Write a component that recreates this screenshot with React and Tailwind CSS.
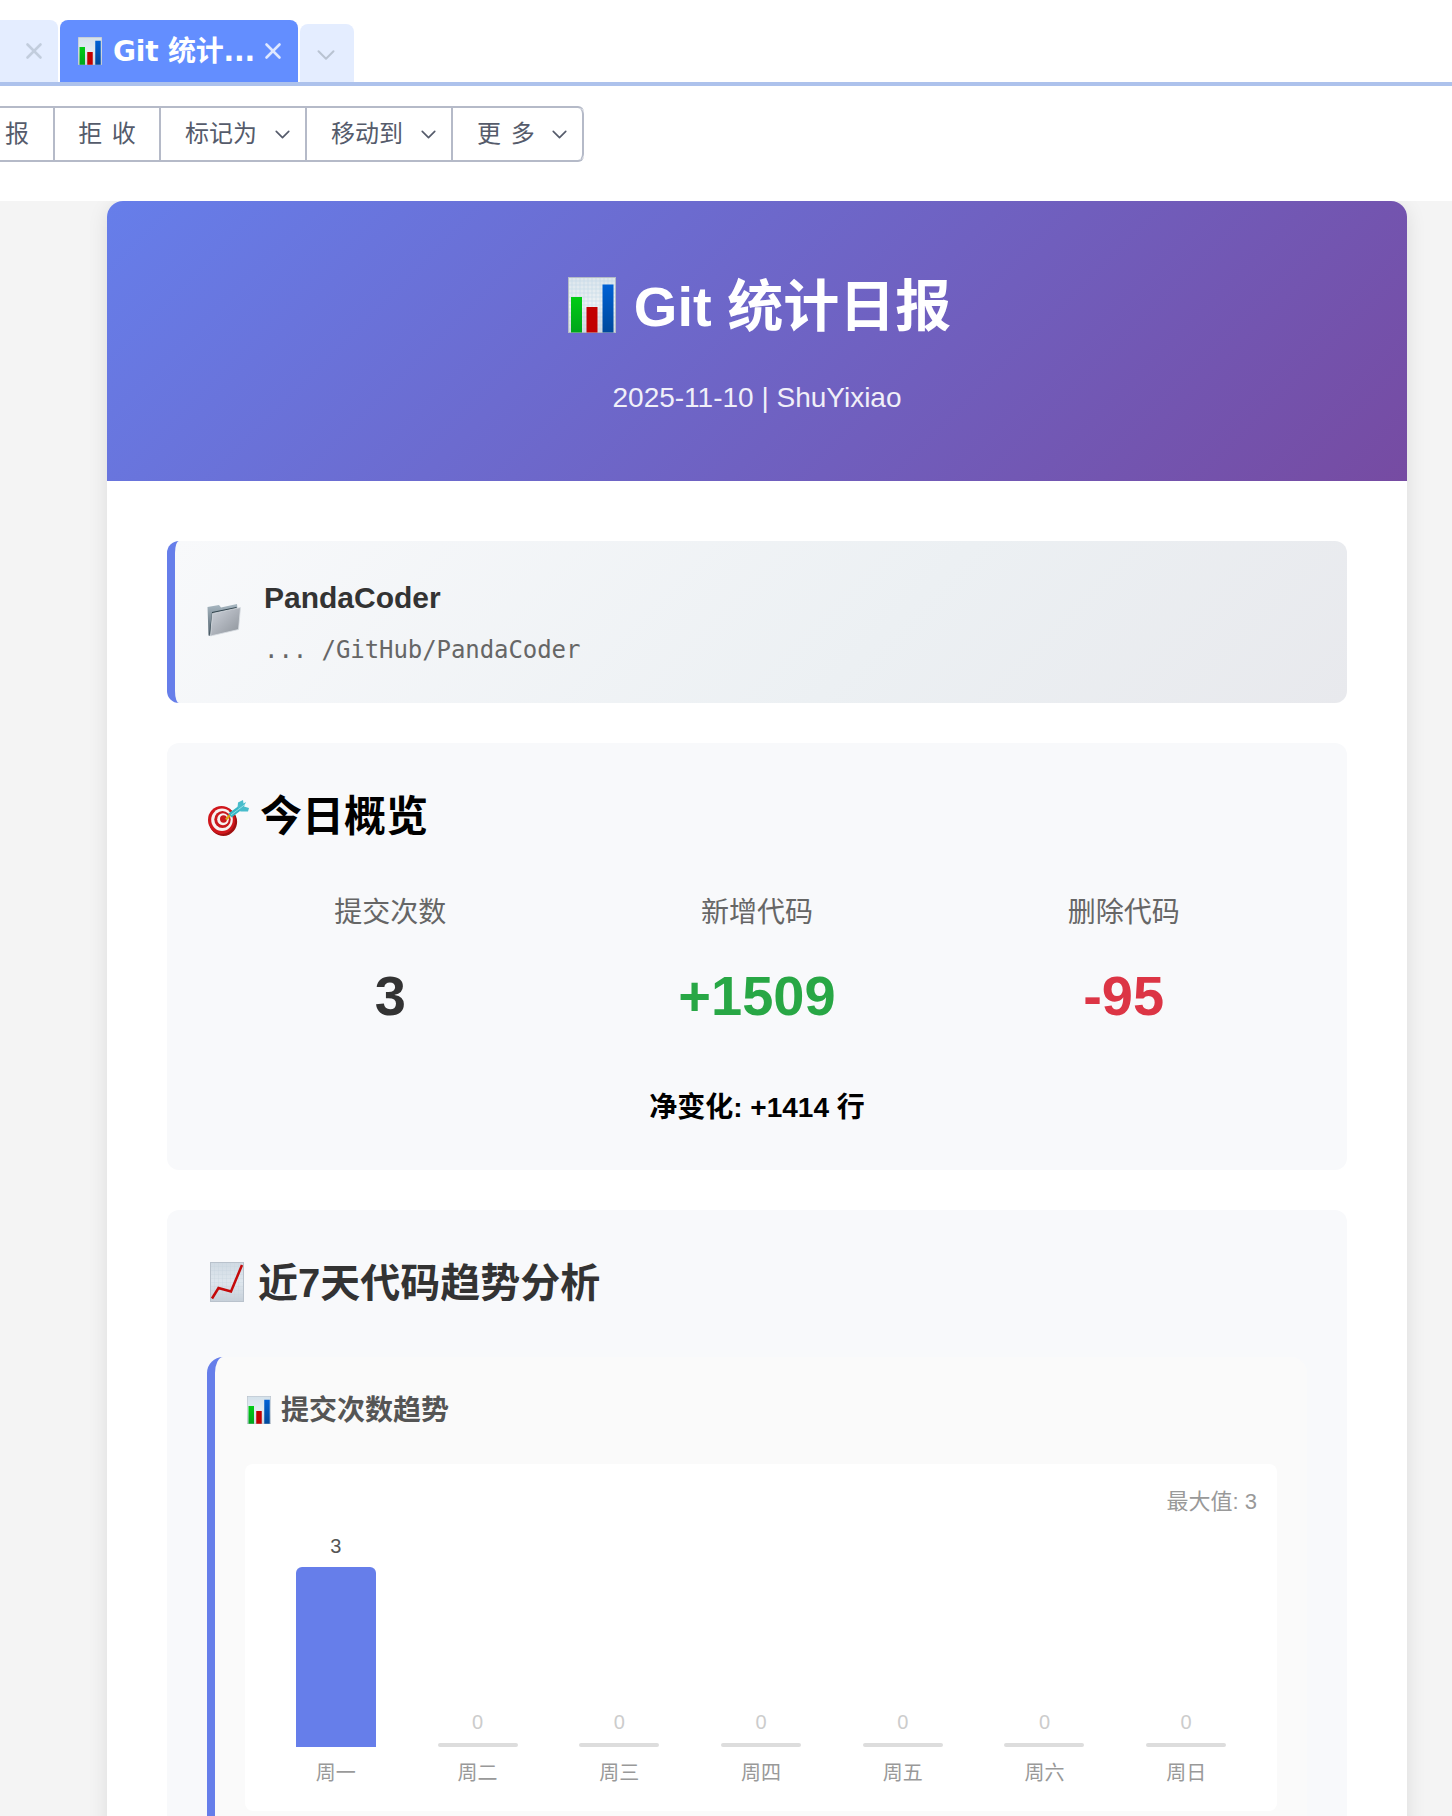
import React from 'react';
import { ChevronDown, X } from 'lucide-react';

const toolbarItems = [
  { label: '报', width: 'w-[55px] pr-[24px] justify-end' },
  { label: '拒 收', width: 'w-[106px] justify-center [word-spacing:3px]' },
  { label: '标记为', width: 'w-[146px] pl-[24px]', menu: true },
  { label: '移动到', width: 'w-[146px] pl-[24px]', menu: true },
  { label: '更 多', width: 'w-[131px] pl-[24px] [word-spacing:3px]', menu: true },
];

const stats = [
  { title: '提交次数', value: '3', color: 'text-[#333333]' },
  { title: '新增代码', value: '+1509', color: 'text-[#28a745]' },
  { title: '删除代码', value: '-95', color: 'text-[#dc3545]' },
];

const commitTrend = [
  { day: '周一', count: 3 },
  { day: '周二', count: 0 },
  { day: '周三', count: 0 },
  { day: '周四', count: 0 },
  { day: '周五', count: 0 },
  { day: '周六', count: 0 },
  { day: '周日', count: 0 },
];

const BarChartIcon = ({ className }) => (
  <svg viewBox="0 0 48 56" className={className}>
    <defs>
      <linearGradient id="paper" x1="0" y1="0" x2="0" y2="1">
        <stop offset="0" stopColor="#dbe5ec" />
        <stop offset="0.5" stopColor="#eef2f5" />
        <stop offset="1" stopColor="#d3dae1" />
      </linearGradient>
      <linearGradient id="green" x1="0" y1="0" x2="0" y2="1">
        <stop offset="0" stopColor="#00cc14" />
        <stop offset="1" stopColor="#00a51c" />
      </linearGradient>
      <linearGradient id="blue" x1="0" y1="0" x2="0" y2="1">
        <stop offset="0" stopColor="#0061d5" />
        <stop offset="1" stopColor="#00499b" />
      </linearGradient>
    </defs>
    <rect width="48" height="56" fill="url(#paper)" />
    <path
      d="M4 0V56M8 0V56M12 0V56M16 0V56M20 0V56M24 0V56M28 0V56M32 0V56M36 0V56M40 0V56M44 0V56M0 4H48M0 8H48M0 12H48M0 16H48M0 20H48M0 24H48M0 28H48M0 32H48M0 36H48M0 40H48M0 44H48M0 48H48M0 52H48"
      stroke="#b9d3e6"
      strokeWidth="0.6"
      opacity="0.7"
    />
    <rect x="0.5" y="0.5" width="47" height="55" fill="none" stroke="#b4bcc6" />
    <rect x="3" y="20" width="11" height="35.500" fill="url(#green)" />
    <rect x="18.500" y="30" width="11" height="25.500" fill="#c20000" />
    <rect x="34.500" y="7.500" width="11" height="48" fill="url(#blue)" />
  </svg>
);

const TrendIcon = ({ className }) => (
  <svg viewBox="0 0 34 40" className={className}>
    <defs>
      <linearGradient id="trendPaper" x1="0" y1="0" x2="0" y2="1">
        <stop offset="0" stopColor="#cfd9e2" />
        <stop offset="0.5" stopColor="#dfe7ee" />
        <stop offset="1" stopColor="#c6cfd8" />
      </linearGradient>
    </defs>
    <rect width="34" height="40" fill="url(#trendPaper)" />
    <path
      d="M4.500 0V40M8.500 0V40M12.500 0V40M16.500 0V40M20.500 0V40M24.500 0V40M28.500 0V40M0 4.500H34M0 8.500H34M0 12.500H34M0 16.500H34M0 20.500H34M0 24.500H34M0 28.500H34M0 32.500H34M0 36.500H34"
      stroke="#c6d2de"
      strokeWidth="0.3"
    />
    <rect x="0.5" y="0.5" width="33" height="39" fill="none" stroke="#b9c2cc" />
    <path d="M2 36.500L8.500 26L21 29.500L32 3" fill="none" stroke="#c40a0a" strokeWidth="2.500" />
  </svg>
);

const FolderIcon = ({ className }) => (
  <svg viewBox="0 0 34 34" className={className}>
    <defs>
      <linearGradient id="folderFront" x1="0" y1="0" x2="1" y2="1">
        <stop offset="0" stopColor="#cfd4dc" />
        <stop offset="0.5" stopColor="#adb2ba" />
        <stop offset="1" stopColor="#8c9299" />
      </linearGradient>
      <linearGradient id="folderBack" x1="0" y1="0" x2="0" y2="1">
        <stop offset="0" stopColor="#a9b8c2" />
        <stop offset="1" stopColor="#50606c" />
      </linearGradient>
    </defs>
    <path d="M0.500 4L12 2L14 4.500L30 1L30.500 6L4 33L1.500 32.500Z" fill="url(#folderBack)" />
    <path d="M5 9L29.500 4L30 6L5.500 12L4 31L2.500 31Z" fill="#33454f" />
    <path d="M5.500 10.500L33.500 4.500L31.500 26.500L3.500 33Z" fill="url(#folderFront)" stroke="#d9dee3" strokeWidth="0.8" />
  </svg>
);

const TargetIcon = ({ className }) => (
  <svg viewBox="0 0 42 36" className={className}>
    <ellipse cx="16" cy="21.500" rx="14" ry="14.500" transform="rotate(-25 16 21.500)" fill="#a01010" />
    <ellipse cx="14.500" cy="20" rx="13.500" ry="14" fill="#d0171c" />
    <ellipse cx="15" cy="19.800" rx="10.800" ry="11.200" fill="#f7f3f1" />
    <ellipse cx="15.500" cy="19.500" rx="8.200" ry="8.600" fill="#c9191d" />
    <ellipse cx="16" cy="19.300" rx="5.800" ry="6" fill="#f7f3f1" />
    <ellipse cx="16.500" cy="19" rx="3.500" ry="3.700" fill="#c9191d" />
    <path d="M19 19.500L24 14" stroke="#d8a515" strokeWidth="2.400" />
    <path d="M21.500 13.500L31 6.500L35 9.500L24.500 17.500Z" fill="#35b5c4" />
    <path d="M30.500 8L31 2.500L36 0L36.500 3.500L39 2L37 6.500L42 8L41 11.500L33.500 11.500Z" fill="#48bccb" />
    <path d="M24 15L38 4.500" stroke="#a4e6ec" strokeWidth="0.8" />
  </svg>
);

const TabBar = () => (
  <div className="flex items-end h-[86px] border-b-4 border-[#adc2ec]">
    <div className="w-[58px] h-[62px] bg-[#e4edff] rounded-tr-lg flex items-center justify-end pr-[11px]">
      <X className="w-[26px] h-[26px] text-[#c2cddd]" strokeWidth={2.4} />
    </div>
    <div className="ml-[2px] w-[238px] h-[62px] bg-[#638eff] rounded-t-lg flex items-center pl-[18px] pr-3">
      <BarChartIcon className="w-[24px] h-[28px]" />
      <span className="ml-[11px] pt-[2px] flex-1 whitespace-nowrap text-[28px] leading-[40px] tracking-[-0.2px] font-bold text-white font-['DejaVu_Sans','Noto_Sans_CJK_SC',sans-serif]">
        Git 统计...
      </span>
      <X className="w-[26px] h-[26px] text-[#dfe8ff]" strokeWidth={2.4} />
    </div>
    <div className="ml-[2px] w-[54px] h-[58px] bg-[#e4edff] rounded-t-lg flex items-center justify-center pt-[3px] pr-[2px]">
      <ChevronDown className="w-[30px] h-[30px] text-[#b9c3d2]" strokeWidth={1.6} />
    </div>
  </div>
);

const Toolbar = () => (
  <div className="h-[115px] pt-5">
    <div className="flex w-[584px] h-[56px] border-y-2 border-[#b5bac8] rounded-r-md">
      {toolbarItems.map((item) => (
        <div
          key={item.label}
          className={`${item.width} flex items-center border-r-2 border-[#b5bac8] text-[24px] text-[#555b6b] whitespace-nowrap last:rounded-r-md`}
        >
          <span className="leading-[36px]">{item.label}</span>
          {item.menu && <ChevronDown className="ml-auto mr-[10px] w-[25px] h-[25px]" strokeWidth={1.6} />}
        </div>
      ))}
    </div>
  </div>
);

const ProjectCard = () => (
  <div className="flex items-center h-[162px] pl-8 rounded-xl border-l-8 border-[#667eea] bg-linear-[135deg,#f8f9fb,#ecf0f3_60%,#e8e9ed]">
    <FolderIcon className="w-[34px] h-[34px] -mt-1" />
    <div className="ml-[23px]">
      <p className="text-[30px] leading-[48px] font-bold text-[#333333]">PandaCoder</p>
      <p className="mt-[8px] text-[24px] leading-[40px] tracking-[-0.07px] text-[#666666] font-['DejaVu_Sans_Mono',monospace]">
        ... /GitHub/PandaCoder
      </p>
    </div>
  </div>
);

const Overview = () => (
  <section className="mt-10 h-[427px] px-10 pt-[39px] rounded-xl bg-[#f8f9fb]">
    <h2 className="flex items-center h-[68px] text-[42px] font-bold text-black">
      <TargetIcon className="w-[42px] h-[36px] mt-1" />
      <span className="ml-[11px]">今日概览</span>
    </h2>
    <div className="grid grid-cols-3 mt-[39px] text-center">
      {stats.map((stat) => (
        <div key={stat.title}>
          <p className="text-[28px] leading-[48px] text-[#666666]">{stat.title}</p>
          <p className={`mt-[14px] text-[56px] leading-[90px] font-bold ${stat.color}`}>{stat.value}</p>
        </div>
      ))}
    </div>
    <p className="mt-[43px] text-center text-[28px] leading-[48px] font-bold text-black">净变化: +1414 行</p>
  </section>
);

const TrendChart = () => {
  const max = Math.max(...commitTrend.map((d) => d.count));

  return (
    <div className="h-[347px] px-5 pt-5 rounded-lg bg-white">
      <p className="text-right text-[22px] leading-[36px] text-[#999999]">最大值: {max}</p>
      <div className="flex items-end h-[227px]">
        {commitTrend.map((d) => (
          <div key={d.day} className="flex-1 flex flex-col items-center">
            <span
              className={`text-[20px] leading-[24px] mb-[9px] ${d.count > 0 ? 'text-[#555555]' : 'text-[#cccccc]'}`}
            >
              {d.count}
            </span>
            {d.count > 0 ? (
              <div
                className="w-[80px] rounded-t-md bg-[#667eea]"
                style={{ height: `${(d.count / max) * 180}px` }}
              />
            ) : (
              <div className="w-[80px] h-1 rounded-sm bg-[#dddddd]" />
            )}
          </div>
        ))}
      </div>
      <div className="flex mt-[10px]">
        {commitTrend.map((d) => (
          <span key={d.day} className="flex-1 text-center text-[20px] leading-[32px] text-[#999999]">
            {d.day}
          </span>
        ))}
      </div>
    </div>
  );
};

const TrendSection = () => (
  <section className="mt-10 px-10 pt-10 rounded-xl bg-[#f8f9fb]">
    <h2 className="flex items-center h-[64px] pl-[3px] text-[40px] font-bold text-[#333333]">
      <TrendIcon className="w-[34px] h-[40px]" />
      <span className="ml-[14px] pt-[2px]">近7天代码趋势分析</span>
    </h2>
    <div className="mt-[43px] h-[520px] pl-[30px] pr-[30px] pt-[30px] rounded-2xl border-l-8 border-[#667eea] bg-[#fafafa]">
      <h3 className="flex items-center h-[45px] mb-[32px] pl-[2px] text-[28px] font-bold text-[#555555]">
        <BarChartIcon className="w-[24px] h-[28px]" />
        <span className="ml-[10px] pt-[2px]">提交次数趋势</span>
      </h3>
      <TrendChart />
    </div>
  </section>
);

const App = () => {
  return (
    <div className="w-[1452px] h-[1816px] overflow-hidden bg-white font-['Liberation_Sans','Noto_Sans_CJK_SC',sans-serif]">
      <TabBar />
      <Toolbar />
      <main className="h-[1615px] overflow-hidden bg-[#f4f4f4] pl-[107px]">
        <div className="w-[1300px] h-[1700px] rounded-t-2xl bg-white shadow-[0_4px_20px_rgba(0,0,0,0.1)]">
          {/* Report header */}
          <header className="h-[280px] pt-[60px] rounded-t-2xl text-white text-center bg-linear-[135deg,#667eea,#764ba2]">
            <h1 className="flex items-center justify-center h-[90px] pl-[5px] text-[56px] font-bold">
              <BarChartIcon className="w-[48px] h-[56px] -mt-[2px]" />
              <span className="ml-[18px] pt-[2px]">Git 统计日报</span>
            </h1>
            <p className="mt-[24px] text-[28px] leading-[45px] opacity-90">2025-11-10 | ShuYixiao</p>
          </header>

          {/* Report body */}
          <div className="px-[60px] pt-[60px]">
            <ProjectCard />
            <Overview />
            <TrendSection />
          </div>
        </div>
      </main>
    </div>
  );
};

export default App;
